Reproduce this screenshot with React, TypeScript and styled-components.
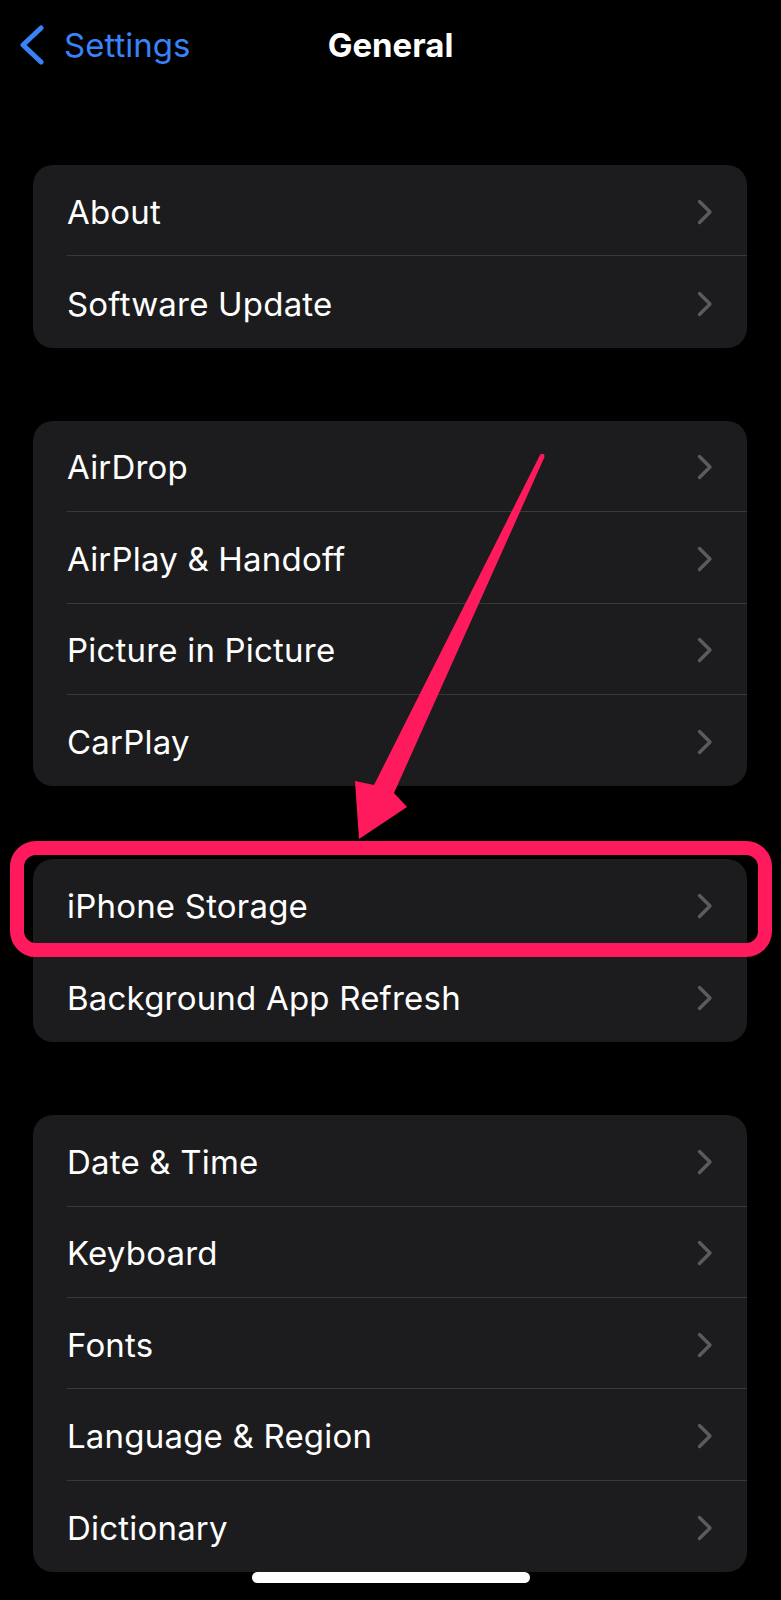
import React from 'react';
import styled, { createGlobalStyle } from 'styled-components';

const GlobalStyle = createGlobalStyle`
  html, body {
    margin: 0;
    padding: 0;
    background: #000;
  }
  body {
    font-family: Inter, "Noto Sans", "Liberation Sans", sans-serif;
    -webkit-font-smoothing: antialiased;
  }
`;

const Screen = styled.div`
  position: relative;
  width: 781px;
  height: 1600px;
  overflow: hidden;
  background: #000;
  color: #fff;
`;

const NavBar = styled.div`
  display: grid;
  grid-template-columns: 1fr auto 1fr;
  align-items: center;
  height: 90px;
  padding: 0 19px;
`;

const BackButton = styled.div`
  display: flex;
  align-items: center;
  gap: 19px;
  color: #3a82f7;
  font-size: 33px;
`;

const NavTitle = styled.div`
  font-size: 33px;
  font-weight: 700;
  color: #fff;
`;

const Groups = styled.div`
  display: flex;
  flex-direction: column;
  gap: 73px;
  padding: 75px 34px 0 33px;
`;

const Group = styled.div`
  background: #1c1c1e;
  border-radius: 20px;
`;

const Row = styled.div<{ $last: boolean }>`
  position: relative;
  display: flex;
  align-items: center;
  justify-content: space-between;
  height: 91.4px;
  margin-left: 34px;
  padding-right: 34px;
  padding-top: 3px;
  box-sizing: border-box;
  border-bottom: ${({ $last }) => ($last ? 'none' : '1.5px solid #38383a')};
`;

const Label = styled.span`
  font-size: 33px;
  letter-spacing: 0.2px;
  color: #fff;
`;

// pink annotation frame drawn over the highlighted row
const Highlight = styled.div`
  position: absolute;
  left: -57px;
  right: -25px;
  top: -18px;
  bottom: -7px;
  border: 14px solid #ff1a5e;
  border-radius: 26px;
  pointer-events: none;
`;

const Annotation = styled.svg`
  position: absolute;
  left: 0;
  top: 0;
  pointer-events: none;
`;

const HomeIndicator = styled.div`
  position: absolute;
  left: 252px;
  bottom: 17px;
  width: 278px;
  height: 11px;
  border-radius: 6px;
  background: #fff;
`;

const Chevron = () => (
  <svg width="16" height="26" viewBox="0 0 16 26" fill="none">
    <path d="M2.5 2.5L13 13L2.5 23.5" stroke="#5b5b5f" strokeWidth="3.4" strokeLinecap="round" strokeLinejoin="round" />
  </svg>
);

const BackChevron = () => (
  <svg width="26" height="40" viewBox="0 0 26 40" fill="none">
    <path d="M22 3L4 20L22 37" stroke="#3a82f7" strokeWidth="5" strokeLinecap="round" strokeLinejoin="round" />
  </svg>
);

const groups: string[][] = [
  ['About', 'Software Update'],
  ['AirDrop', 'AirPlay & Handoff', 'Picture in Picture', 'CarPlay'],
  ['iPhone Storage', 'Background App Refresh'],
  ['Date & Time', 'Keyboard', 'Fonts', 'Language & Region', 'Dictionary'],
];

export default function App() {
  return (
    <>
      <GlobalStyle />
      <Screen>
        <NavBar>
          <BackButton>
            <BackChevron />
            Settings
          </BackButton>
          <NavTitle>General</NavTitle>
          <div />
        </NavBar>

        <Groups>
          {groups.map((items, gi) => (
            <Group key={gi}>
              {items.map((item, i) => (
                <Row key={item} $last={i === items.length - 1}>
                  <Label>{item}</Label>
                  <Chevron />
                  {item === 'iPhone Storage' && <Highlight />}
                </Row>
              ))}
            </Group>
          ))}
        </Groups>

        <Annotation width="781" height="1600" viewBox="0 0 781 1600">
          <polygon
            fill="#ff1a5e"
            points="540,455 544.5,457 394,793 407,807 359,839 355,781 374,785"
          />
          <circle cx="542.2" cy="456" r="2.3" fill="#ff1a5e" />
        </Annotation>

        <HomeIndicator />
      </Screen>
    </>
  );
}
